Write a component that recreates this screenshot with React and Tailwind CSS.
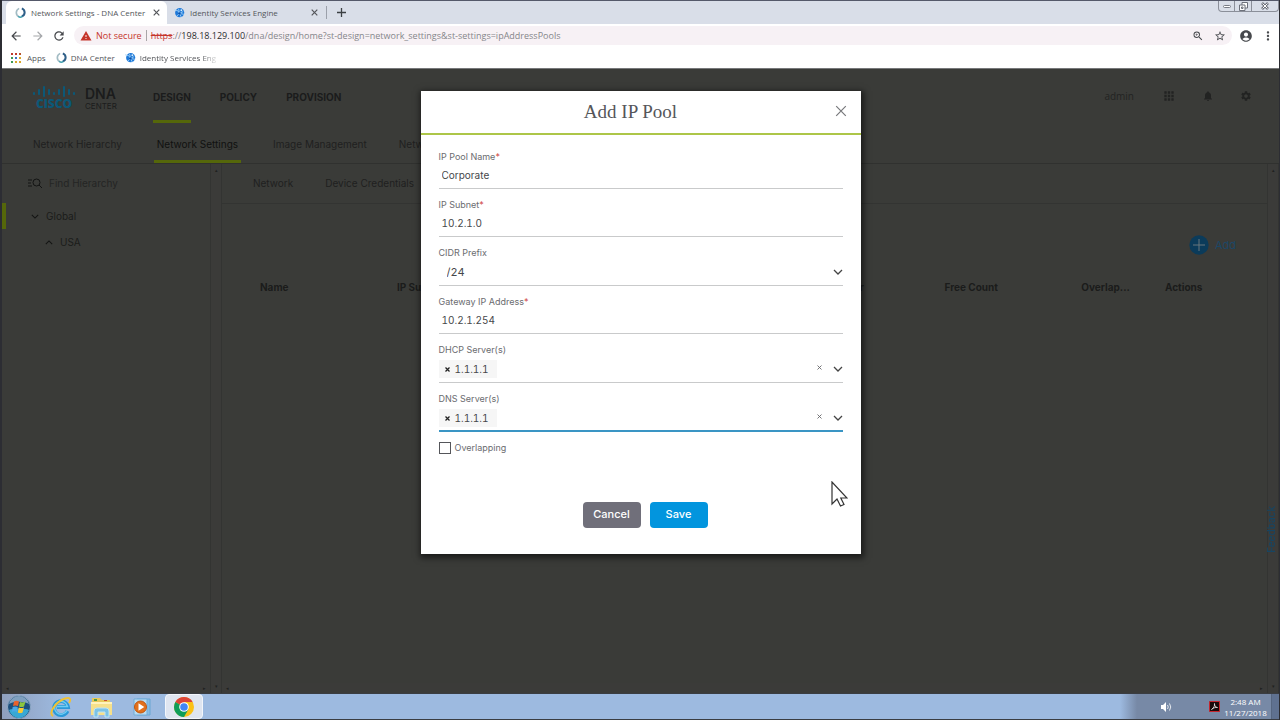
import { useState } from "react";
import {
  MdAccountCircle,
  MdApps,
  MdArrowBack,
  MdArrowForward,
  MdMoreVert,
  MdNotifications,
  MdRefresh,
  MdSettings,
  MdStarBorder,
  MdWarning,
  MdZoomIn,
} from "react-icons/md";

const columns = ["Name", "IP Subnet", "Gateway", "DHCP Server", "DNS Server", "Free Count", "Overlap...", "Actions"];

const DnaIcon = () => (
  <svg viewBox="0 0 12 12" className="size-[11px] shrink-0" fill="none" aria-hidden="true">
    <path d="M4.500 1.500C.5 3.500 .5 8.500 4 10.500" stroke="#a3bcc4" strokeWidth="1.800" />
    <path d="M7.500 1.500C11.500 3.500 11.500 8.500 7.500 10.300" stroke="#2f5f88" strokeWidth="2.200" />
    <path d="M3.500 10.300C5 11.300 7 11 8 10.200" stroke="#3f9fae" strokeWidth="1.600" />
  </svg>
);

const IseIcon = () => (
  <svg viewBox="0 0 12 12" className="size-[11px] shrink-0" aria-hidden="true">
    <circle cx="6.200" cy="6.200" r="5" fill="#1f79d8" />
    <path d="M0 3L4 4L6 7L10 5M3 10L6 7L5 2M8 11L6 7L11 8" stroke="#a9d8fb" strokeWidth=".9" fill="none" />
    <circle cx="6" cy="7" r="1.300" fill="#0b4ea8" />
    <circle cx="8" cy="3.500" r="1" fill="#d9effd" />
  </svg>
);

const Cross = ({ className }) => (
  <svg viewBox="0 0 10 10" className={className} stroke="currentColor" fill="none" aria-hidden="true">
    <path d="M1 1L9 9M9 1L1 9" />
  </svg>
);

const Chevron = ({ className }) => (
  <svg viewBox="0 0 10 6" className={className} stroke="currentColor" strokeWidth="1.300" fill="none" aria-hidden="true">
    <path d="M1 1L5 5L9 1" />
  </svg>
);

const AppsIcon = () => {
  const colors = ["#c0392b", "#c0392b", "#b5542b", "#3c9a55", "#3b6fc4", "#d9a62a", "#3c9a55", "#d9a62a", "#d9a62a"];
  return (
    <svg viewBox="0 0 10 10" className="size-[10px]" aria-hidden="true">
      {colors.map((color, i) => (
        <rect key={i} x={(i % 3) * 4} y={Math.floor(i / 3) * 4} width="2" height="2" fill={color} />
      ))}
    </svg>
  );
};

const BrowserChrome = () => (
  <div className="bg-white font-['Open_Sans',sans-serif] text-[#54565a] shrink-0">
    <div className="flex h-6 items-stretch border-t border-[#55596a] bg-[#d9dee8]">
      <div className="ml-1 flex w-[161px] items-center rounded-t-md bg-white pl-[9px] pr-[7px]">
        <DnaIcon />
        <span className="ml-[5px] flex-1 whitespace-nowrap text-[8px]">Network Settings - DNA Center</span>
        <button type="button" aria-label="Close tab">
          <Cross className="size-[7px] stroke-[1.700]" />
        </button>
      </div>
      <div className="flex w-[159px] items-center pl-[7px] pr-2">
        <IseIcon />
        <span className="ml-[5px] flex-1 whitespace-nowrap text-[8px]">Identity Services Engine</span>
        <button type="button" aria-label="Close tab">
          <Cross className="size-[7px] stroke-[1.700]" />
        </button>
      </div>
      <div className="my-[5px] border-l border-[#9ba0aa]" />
      <button type="button" aria-label="New tab" className="ml-[10px] self-center">
        <svg viewBox="0 0 9 9" className="size-[9px]" stroke="#3c4043" fill="none">
          <path d="M4.500 0V9M0 4.500H9" strokeWidth="1.300" />
        </svg>
      </button>
      <div className="ml-auto flex h-[11px] rounded-b-sm border border-t-0 border-[#8b8f99]">
        <button type="button" aria-label="Minimize" className="grid w-4 place-items-center border-r border-[#8b8f99]">
          <span className="h-[3px] w-2 rounded-sm border border-[#777b85] bg-white" />
        </button>
        <button type="button" aria-label="Restore" className="grid w-[17px] place-items-center border-r border-[#8b8f99]">
          <svg viewBox="0 0 9 9" className="size-[9px]" stroke="#6d717b" fill="#fff">
            <path d="M3 .5H8.500V6H3Z" />
            <path d="M.5 3H6V8.500H.5Z" />
            <path d="M2.500 5H4V6.500H2.500Z" />
          </svg>
        </button>
        <button type="button" aria-label="Close" className="grid w-[26px] place-items-center">
          <svg viewBox="0 0 8 8" className="size-2" fill="none">
            <path d="M1 1L7 7M7 1L1 7" stroke="#6d717b" strokeWidth="2.600" />
            <path d="M1.500 1.500L6.500 6.500M6.500 1.500L1.500 6.500" stroke="#fff" strokeWidth="1" />
          </svg>
        </button>
      </div>
    </div>

    <div className="flex h-[23px] items-center pl-[7px] pr-1 text-[#47494d]">
      <button type="button" aria-label="Back">
        <MdArrowBack className="size-[14px]" />
      </button>
      <button type="button" aria-label="Forward" className="ml-2 text-[#a5a7aa]">
        <MdArrowForward className="size-[14px]" />
      </button>
      <button type="button" aria-label="Reload" className="ml-[7px]">
        <MdRefresh className="size-[14px]" />
      </button>
      <div className="ml-2 flex h-[19px] flex-1 items-center rounded-full bg-[#f7f1f5] pl-1.5 pr-1.5 text-[9px]">
        <MdWarning className="size-3 text-[#c5352b]" />
        <span className="ml-1 text-[#c5352b]">Not secure</span>
        <span className="mx-1 h-[11px] border-l border-[#a9a5a8]" />
        <span className="whitespace-nowrap text-[#85868a]">
          <span className="text-[#c5352b] line-through">https</span>://
          <span className="text-[#2b2c2e]">198.18.129.100</span>
          /dna/design/home?st-design=network_settings&amp;st-settings=ipAddressPools
        </span>
        <MdZoomIn className="ml-auto size-3" />
        <MdStarBorder className="ml-[10px] size-3" />
      </div>
      <button type="button" aria-label="Profile" className="ml-[7px]">
        <MdAccountCircle className="size-[14px]" />
      </button>
      <button type="button" aria-label="Menu" className="ml-2">
        <MdMoreVert className="size-[14px]" />
      </button>
    </div>

    <div className="flex h-[21px] items-center pl-[9px] text-[8px]">
      <a href="#apps" className="flex items-center gap-1.5">
        <AppsIcon />
        Apps
      </a>
      <a href="#dna" className="ml-[10px] flex items-center gap-1">
        <DnaIcon />
        DNA Center
      </a>
      <a href="#ise" className="ml-[10px] flex items-center gap-1">
        <IseIcon />
        <span className="whitespace-nowrap [mask-image:linear-gradient(to_right,black_80%,rgb(0_0_0/0.2))]">
          Identity Services Eng
        </span>
      </a>
    </div>
  </div>
);

const CiscoLogo = () => {
  const bars = [3, 6, 11, 6, 3, 6, 11, 6, 3];
  return (
    <div className="flex flex-col items-center text-[#0c5877]">
      <svg viewBox="0 0 44 12" className="h-3 w-11" fill="currentColor" aria-hidden="true">
        {bars.map((h, i) => (
          <rect key={i} x={i * 5 + 1} y={i % 4 === 2 ? 0 : 9 - h} width="2" height={h} rx=".8" />
        ))}
      </svg>
      <span className="font-['Open_Sans',sans-serif] text-[12px] font-extrabold leading-[11px]">CISCO</span>
    </div>
  );
};

const Header = () => (
  <header className="shrink-0 border-b border-[#30312f]">
    <div className="flex h-[54px]">
      <div className="flex w-[151px] items-start pl-[30px] pt-[17px]">
        <CiscoLogo />
        <div className="ml-[9px] text-[#1b1c1c]">
          <div className="text-[14px] font-semibold leading-4">DNA</div>
          <div className="text-[8px] leading-[8px]">CENTER</div>
        </div>
      </div>
      <nav className="flex gap-[29px] text-[10px] font-bold text-[#1b1c1c]">
        <a href="#design" className="flex items-center border-b-[3px] border-[#55670a] pt-[5px]">DESIGN</a>
        <a href="#policy" className="flex items-center pt-0.5">POLICY</a>
        <a href="#provision" className="flex items-center pt-0.5">PROVISION</a>
      </nav>
      <div className="ml-auto flex items-center gap-[26px] pr-[27px] text-[#222322]">
        <span className="mr-0.5 font-['Open_Sans',sans-serif] text-[10px]">admin</span>
        <MdApps className="size-[14px]" />
        <MdNotifications className="size-3" />
        <MdSettings className="size-3" />
      </div>
    </div>
    <nav className="flex h-10 gap-8 pl-[31px] text-[10px] text-[#1f201f]">
      <a href="#hierarchy" className="flex items-center pt-0.5">Network Hierarchy</a>
      <a href="#settings" className="flex items-center border-b-[3px] border-[#55670a] px-[3px] pt-[5px] text-[#101110]">Network Settings</a>
      <a href="#image" className="flex items-center pt-0.5">Image Management</a>
      <a href="#plug" className="flex items-center pt-0.5">Network Plug and Play</a>
    </nav>
  </header>
);

const VerticalScroll = () => (
  <div className="flex w-3 shrink-0 flex-col items-center justify-between border-x border-[#333432] bg-[#3b3b39] py-1 text-[5px] leading-[5px] text-[#202120]">
    <span>▴</span>
    <span>▾</span>
  </div>
);

const HorizontalScroll = () => (
  <div className="flex h-[10px] shrink-0 items-center justify-between bg-[#3b3b39] px-1 text-[5px] leading-[5px] text-[#202120]">
    <span>◂</span>
    <span>▸</span>
  </div>
);

const Sidebar = () => (
  <div className="flex w-[220px] shrink-0">
    <aside className="flex flex-1 flex-col text-[10px] text-[#1a1b1a]">
      <label className="flex h-[39px] items-center pl-[25px]">
        <svg viewBox="0 0 15 11" className="h-[11px] w-[15px]" stroke="#131413" fill="none" aria-hidden="true">
          <path d="M1 2H5M1 5H4M1 8H5" />
          <circle cx="9.500" cy="4.500" r="3.500" />
          <path d="M12 7L15 10" />
        </svg>
        <input
          aria-label="Find Hierarchy"
          placeholder="Find Hierarchy"
          className="ml-[7px] w-32 bg-transparent outline-none placeholder:text-[#242524]"
        />
      </label>
      <a href="#global" className="flex h-[26px] items-center border-l-4 border-[#55670a] pl-[25px]">
        <Chevron className="mr-[7px] h-[5px] w-2 text-[#131413]" />
        Global
      </a>
      <a href="#usa" className="flex h-[26px] items-center pl-[43px]">
        <Chevron className="mr-[7px] h-[5px] w-2 rotate-180 text-[#131413]" />
        USA
      </a>
      <div className="mt-auto">
        <HorizontalScroll />
      </div>
    </aside>
    <VerticalScroll />
  </div>
);

const PoolList = () => (
  <main className="flex min-w-0 flex-1 flex-col text-[#1b1c1b]">
    <nav className="flex h-10 items-center gap-8 border-b border-[#333432] pl-[31px] text-[10px] text-[#1f201f]">
      <a href="#network">Network</a>
      <a href="#credentials">Device Credentials</a>
    </nav>
    <div className="flex justify-end pr-[31px] pt-[31px]">
      <button type="button" className="flex items-center gap-1.5 text-[11px] text-[#1c4766]">
        <svg viewBox="0 0 20 20" className="size-5" aria-hidden="true">
          <circle cx="10" cy="10" r="9.700" fill="#0b3b5a" />
          <path d="M10 4V16M4 10H16" stroke="#68777d" />
        </svg>
        Add
      </button>
    </div>
    <table className="mt-[23px] w-full table-fixed text-left text-[10px]">
      <thead>
        <tr>
          {columns.map((name) => (
            <th
              key={name}
              className="h-[18px] w-[13.1%] pl-[38px] font-bold whitespace-nowrap nth-7:w-[8%] last:w-auto"
            >
              {name}
            </th>
          ))}
        </tr>
      </thead>
    </table>
    <div className="mt-auto">
      <HorizontalScroll />
    </div>
  </main>
);

const TextField = ({ id, label, required, value, onChange }) => (
  <div className="pt-[10px]">
    <label htmlFor={id} className="block text-[9px] leading-3 text-[#6b6c70]">
      {label}
      {required && <span className="text-[#d0453f]">*</span>}
    </label>
    <input
      id={id}
      value={value}
      onChange={(e) => onChange(e.target.value)}
      className="block h-[26px] w-full border-b border-[#c9cacb] bg-transparent pb-px pl-[3px] text-[10px] tabular-nums text-[#46474a] outline-none"
    />
  </div>
);

const ServerField = ({ id, label, servers, onChange, active }) => (
  <div className="pt-[10px]">
    <label htmlFor={id} className="block text-[9px] leading-3 text-[#6b6c70]">{label}</label>
    <div
      className={
        active
          ? "flex h-[27px] items-center border-b-2 border-[#3a95c4] pt-px"
          : "flex h-[27px] items-center border-b border-[#c9cacb]"
      }
    >
      {servers.map((server) => (
        <span
          key={server}
          className="flex h-[18px] items-center gap-[5px] bg-[#f6f6f6] pl-1.5 pr-2 text-[10px] tabular-nums text-[#46474a]"
        >
          <button type="button" aria-label={`Remove ${server}`} onClick={() => onChange(servers.filter((s) => s !== server))}>
            <Cross className="size-[5px] stroke-[2.500] text-[#222]" />
          </button>
          {server}
        </span>
      ))}
      <input id={id} className="min-w-0 flex-1 bg-transparent outline-none" />
      <button type="button" aria-label={`Clear ${label}`} className="mb-1 mr-[11px]" onClick={() => onChange([])}>
        <Cross className="size-[5px] stroke-[1.800] text-[#66676a]" />
      </button>
      <Chevron className="h-[6px] w-[10px] text-[#444]" />
    </div>
  </div>
);

const AddPoolDialog = () => {
  const [name, setName] = useState("Corporate");
  const [subnet, setSubnet] = useState("10.2.1.0");
  const [prefix, setPrefix] = useState("/24");
  const [gateway, setGateway] = useState("10.2.1.254");
  const [dhcp, setDhcp] = useState(["1.1.1.1"]);
  const [dns, setDns] = useState(["1.1.1.1"]);
  const [overlapping, setOverlapping] = useState(false);

  return (
    <form
      role="dialog"
      aria-labelledby="dialog-title"
      className="relative w-[440px] bg-white shadow-[1px_2px_6px_2px_rgba(0,0,0,0.55)]"
      onSubmit={(e) => e.preventDefault()}
    >
      <div className="flex h-11 items-center border-b-2 border-[#adc648] pl-1.5 pr-[14px]">
        <h1 id="dialog-title" className="flex-1 text-center font-['Liberation_Serif',serif] text-[19px] text-[#55565a]">
          Add IP Pool
        </h1>
        <button type="button" aria-label="Close dialog" className="mb-[3px]">
          <Cross className="size-3 text-[#77787b]" />
        </button>
      </div>

      <div className="px-[18px] pt-1.5">
        <TextField id="name" label="IP Pool Name" required value={name} onChange={setName} />
        <TextField id="subnet" label="IP Subnet" required value={subnet} onChange={setSubnet} />
        <div className="pt-[10px]">
          <label htmlFor="prefix" className="block text-[9px] leading-3 text-[#6b6c70]">CIDR Prefix</label>
          <div className="flex h-[27px] items-center border-b border-[#c9cacb]">
            <select
              id="prefix"
              value={prefix}
              onChange={(e) => setPrefix(e.target.value)}
              className="flex-1 appearance-none bg-transparent pl-2 text-[11px] tabular-nums text-[#46474a] outline-none"
            >
              <option>/24</option>
            </select>
            <Chevron className="h-[6px] w-[10px] text-[#444]" />
          </div>
        </div>
        <TextField id="gateway" label="Gateway IP Address" required value={gateway} onChange={setGateway} />
        <ServerField id="dhcp" label="DHCP Server(s)" servers={dhcp} onChange={setDhcp} />
        <ServerField id="dns" label="DNS Server(s)" servers={dns} onChange={setDns} active />
        <label className="mt-[10px] flex w-fit items-center gap-1 text-[9px] leading-3 text-[#6b6c70]">
          <input
            type="checkbox"
            checked={overlapping}
            onChange={(e) => setOverlapping(e.target.checked)}
            className="size-3 appearance-none border border-[#55565a] checked:bg-[#0295de]"
          />
          Overlapping
        </label>
      </div>

      <div className="mt-12 flex justify-center gap-[9px] pb-[26px] pl-[9px] text-[11px] font-medium text-white">
        <button type="button" className="h-[26px] w-[58px] rounded bg-[#706f7a] pb-0.5">Cancel</button>
        <button type="submit" className="h-[26px] w-[58px] rounded bg-[#0295de] pb-0.5">Save</button>
      </div>

      {/* mouse pointer */}
      <svg viewBox="0 0 17 26" className="absolute bottom-[47px] right-[13px] h-[26px] w-[17px]" aria-hidden="true">
        <path d="M1 1V23L6 18L9.500 25L13 23.500L9.800 17H16Z" fill="#fff" stroke="#333" strokeWidth="1.200" />
      </svg>
    </form>
  );
};

const Taskbar = () => (
  <footer className="flex h-[27px] shrink-0 items-stretch border-y border-[#3a3d42] bg-[linear-gradient(to_right,#8f9fbd,#9dbae0_60px,#9dbae0_1118px,#7789a6_1135px)] font-['Open_Sans',sans-serif] text-[8px] text-white">
    <button type="button" aria-label="Start" className="ml-[5px] self-center">
      <svg viewBox="0 0 24 24" className="size-6">
        <circle cx="12" cy="12" r="11.500" fill="#1c4f7e" stroke="#8fa9c4" />
        <path d="M2 15C6 13 18 13 22 15C20 21 15 23 12 23C9 23 4 21 2 15Z" fill="#38a8d4" />
        <path d="M2 9C3 4 8 1 12 1C16 1 21 4 22 9C17 6 7 6 2 9Z" fill="#7fa0bf" />
        <path d="M7 6.500Q9.500 5 12 6.500L11 11Q8.500 10 6 11Z" fill="#e8622c" />
        <path d="M13 7Q15.500 8 18.500 6.500L17 11.500Q14.500 12.500 12 11.500Z" fill="#8cc63e" />
        <path d="M5.700 12Q8 11 10.800 12L9.800 17Q7 15.500 4.700 17Z" fill="#49a8e8" />
        <path d="M11.800 12.500Q14.500 13.500 17 12.500L15.500 17.500Q13.500 18.500 10.800 17.500Z" fill="#fcc92f" />
      </svg>
    </button>
    <button type="button" aria-label="Internet Explorer" className="ml-[19px] self-center">
      <svg viewBox="0 0 22 22" className="size-[22px]" fill="none">
        <path d="M17.500 15A7 7 0 1 1 18 11H7" stroke="#2b98d8" strokeWidth="3.800" />
        <path d="M17 14.500A6.500 6.500 0 1 1 17.500 10.500H7" stroke="#6fcdf2" strokeWidth="1.500" />
        <path d="M3 20C-2 18 5 6 15 2.500C21 .5 21 4 19 7" stroke="#f1c232" strokeWidth="1.900" />
      </svg>
    </button>
    <button type="button" aria-label="File Explorer" className="ml-[18px] self-center">
      <svg viewBox="0 0 23 22" className="h-[22px] w-[23px]">
        <path d="M2 2H10L12 4H20V8H2Z" fill="#e8c95b" />
        <path d="M4 3H7V5H4Z" fill="#4a9b47" />
        <path d="M14 4H17V5H14Z" fill="#c94b35" />
        <path d="M1 6H22V19H1Z" fill="#f6e08a" />
        <path d="M1 6H22V8H1Z" fill="#fff3bd" />
        <path d="M4 21V15Q4 12 7 12H16Q19 12 19 15V21H15V16H8V21Z" fill="#7cc3e6" stroke="#bfe5f6" />
      </svg>
    </button>
    <button type="button" aria-label="Media Player" className="ml-[20px] self-center">
      <svg viewBox="0 0 18 18" className="size-[18px]">
        <path d="M4 1H17V17H4Z" fill="#86bce4" stroke="#6ba5d2" />
        <path d="M1 1H14V17H1Z" fill="#b9dcf2" stroke="#72acd8" />
        <circle cx="7.500" cy="9" r="6" fill="#e2701c" stroke="#bf5610" />
        <path d="M5.500 5.300L11.300 9L5.500 12.700Z" fill="#fff" />
      </svg>
    </button>
    <button type="button" aria-label="Google Chrome" className="ml-[14px] grid w-[38px] place-items-center rounded-sm border border-[#f3f6fb] bg-[#dfe5f0]">
      <svg viewBox="0 0 20 20" className="size-5">
        <circle cx="10" cy="10" r="10" fill="#fbc116" />
        <path d="M10 10L1.340 5A10 10 0 0 1 18.660 5Z" fill="#db4437" />
        <path d="M1.340 5A10 10 0 0 0 10 20L14.300 12.500L10 10Z" fill="#0f9d58" />
        <path d="M10 5H18.660L14.300 12.500Z" fill="#fbc116" />
        <circle cx="10" cy="10" r="4.800" fill="#fff" />
        <circle cx="10" cy="10" r="3.800" fill="#4285f4" />
      </svg>
    </button>
    <div className="ml-auto flex items-center">
      <svg viewBox="0 0 11 10" className="mr-[37px] h-[10px] w-[11px]" aria-hidden="true">
        <path d="M0 3H2L5 0V10L2 7H0Z" fill="#fff" />
        <path d="M6.500 3Q8 5 6.500 7M8.500 1.500Q11 5 8.500 8.500" stroke="#e5e9f0" fill="none" />
      </svg>
      <svg viewBox="0 0 11 11" className="size-[11px]" aria-hidden="true">
        <path d="M.5 .5H10.500V10.500H.5Z" fill="#190a0b" stroke="#c4262e" />
        <path d="M2.500 8.500C5 7 6 4 5.500 2.500C5 4 6.500 6.500 8.500 6.500C7 6 4 7 2.500 8.500Z" stroke="#fff" strokeWidth=".7" fill="none" />
      </svg>
      <div className="w-[51px] text-center leading-[11px]">
        <div>2:48 AM</div>
        <div>11/27/2018</div>
      </div>
      <div className="h-full w-2 border-l border-[#566680] bg-[#5f7190]" />
    </div>
  </footer>
);

const App = () => (
  <div className="flex h-screen flex-col overflow-hidden border-l-2 border-r border-[#2c2d33] font-['Inter',sans-serif]">
    <BrowserChrome />
    <div className="relative flex min-h-0 flex-1 flex-col border-t border-[#77787a] bg-[#3a3b38]">
      <Header />
      <div className="flex min-h-0 flex-1">
        <Sidebar />
        <PoolList />
        <VerticalScroll />
      </div>
      <a
        href="#feedback"
        className="absolute bottom-[140px] right-[2px] rotate-180 text-[10px] font-medium leading-3 text-[#174562] [writing-mode:vertical-rl]"
      >
        Feedback
      </a>
      <div className="absolute inset-0 flex items-start justify-center pt-[22px]">
        <AddPoolDialog />
      </div>
    </div>
    <Taskbar />
  </div>
);

export default App;
